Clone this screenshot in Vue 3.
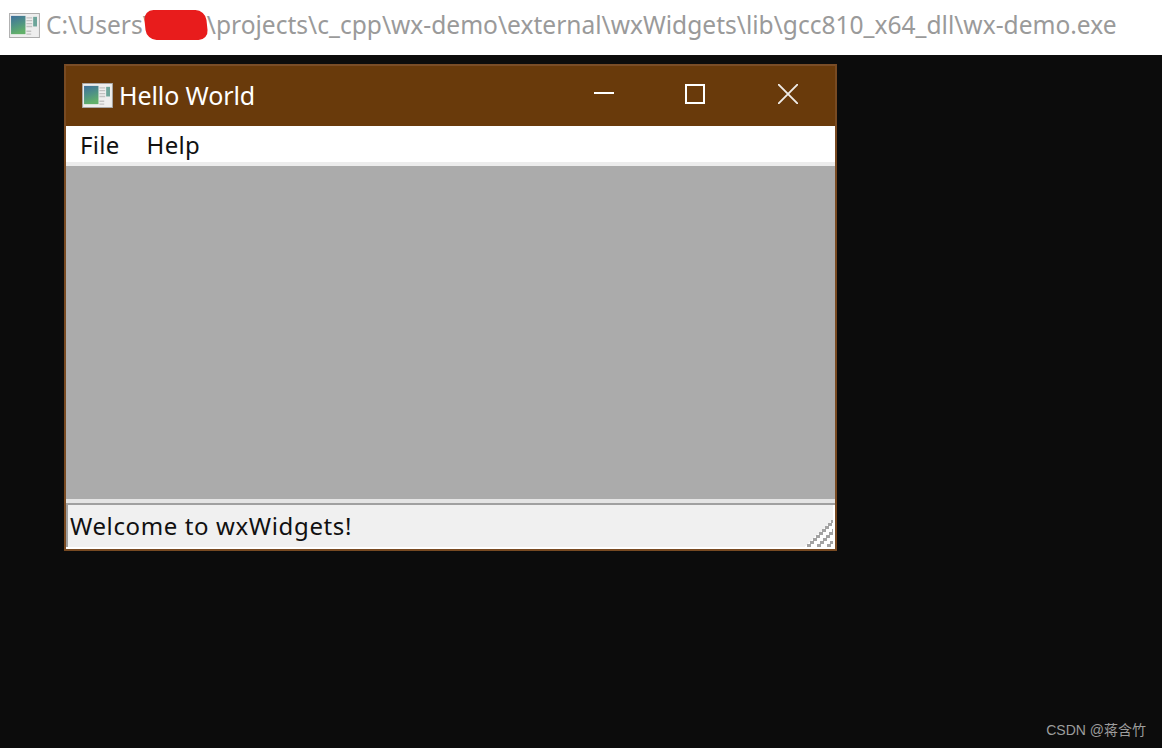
<script setup>
const path1 = 'C:\\Users\\'
const path2 = '\\projects\\c_cpp\\wx-demo\\external\\wxWidgets\\lib\\gcc810_x64_dll\\wx-demo.exe'

const gripBlocks = []
for (const start of [4, 14, 24]) {
  for (let i = 0; start + i * 3 < 30; i++) {
    gripBlocks.push({ x: start + i * 3, y: 24 - i * 3 })
  }
}
</script>

<template>
  <div class="screen">
    <header class="pathbar">
      <svg class="appicon" width="31" height="25" viewBox="0 0 32 26">
        <defs>
          <linearGradient id="pane" x1="0" y1="0" x2="0.3" y2="1">
            <stop offset="0" stop-color="#3f6f9c" />
            <stop offset="0.55" stop-color="#4f9384" />
            <stop offset="1" stop-color="#62b06a" />
          </linearGradient>
        </defs>
        <rect x="0.5" y="0.5" width="31" height="25" fill="#eeeeee" stroke="#a9a9a9" />
        <rect x="2" y="3" width="15" height="19" fill="url(#pane)" />
        <rect x="25" y="4" width="4" height="10" fill="#6da59a" />
        <path d="M18 5h6M18 8h6M18 11h6M18 14h6M18 19h5M18 22h5" stroke="#c2c2c2" stroke-width="1.4" />
      </svg>
      <span class="path">{{ path1 }}<span class="redact"></span>{{ path2 }}</span>
    </header>

    <section class="window">
      <div class="titlebar">
        <svg class="appicon" width="31" height="25" viewBox="0 0 32 26">
          <rect x="0.5" y="0.5" width="31" height="25" fill="#eeeeee" stroke="#a9a9a9" />
          <rect x="2" y="3" width="15" height="19" fill="url(#pane)" />
          <rect x="25" y="4" width="4" height="10" fill="#6da59a" />
          <path d="M18 5h6M18 8h6M18 11h6M18 14h6M18 19h5M18 22h5" stroke="#c2c2c2" stroke-width="1.4" />
        </svg>
        <span class="title">Hello World</span>
        <div class="controls">
          <svg width="20" height="20" viewBox="0 0 20 20"><path d="M0 9h20" stroke="#fff" stroke-width="2" /></svg>
          <svg class="max" width="20" height="20" viewBox="0 0 20 20"><rect x="1" y="1" width="18" height="18" fill="none" stroke="#fff" stroke-width="2" /></svg>
          <svg width="20" height="20" viewBox="0 0 20 20"><path d="M0 0L20 20M20 0L0 20" stroke="#f0ece8" stroke-width="1.9" /></svg>
        </div>
      </div>
      <nav class="menu">
        <span>File</span>
        <span>Help</span>
      </nav>
      <div class="client"></div>
      <footer class="status">
        <span class="status-text">Welcome to wxWidgets!</span>
        <svg class="grip" width="30" height="28" viewBox="0 0 30 28" shape-rendering="crispEdges">
          <path d="M30 0V28H0Z" fill="#ffffff" />
          <rect v-for="(b, i) in gripBlocks" :key="i" :x="b.x" :y="b.y" width="4" height="3" fill="#a3a3a3" />
        </svg>
      </footer>
    </section>

    <div class="watermark">CSDN @蒋含竹</div>
  </div>
</template>

<style scoped>
.screen {
  position: relative;
  width: 1162px;
  height: 748px;
  overflow: hidden;
  background: #0c0c0c;
  font-family: "Noto Sans", "Open Sans", sans-serif;
}
.pathbar {
  display: flex;
  align-items: center;
  gap: 6px;
  height: 55px;
  padding: 0 0 4px 9px;
  background: #ffffff;
  box-sizing: border-box;
}
.path {
  display: flex;
  align-items: center;
  margin-bottom: 2px;
  color: #9a9a9a;
  font-size: 24.55px;
  white-space: pre;
}
.redact {
  display: inline-block;
  width: 62px;
  height: 30px;
  margin: 0 0 0 -7px;
  background: #e81c1c;
  border-radius: 10px;
  transform: skewX(6deg);
}
.window {
  display: flex;
  flex-direction: column;
  width: 773px;
  height: 487px;
  margin: 9px 0 0 64px;
  box-sizing: border-box;
  border: 2px solid #784a22;
  border-top-color: #7a4d27;
  background: #ffffff;
}
.titlebar {
  display: flex;
  align-items: center;
  height: 60px;
  padding: 0 0 2px 16px;
  box-sizing: border-box;
  background: #693a0b;
  flex: none;
}
.title {
  margin: 0 0 1px 6px;
  color: #ffffff;
  font-size: 25px;
  letter-spacing: -0.1px;
}
.controls {
  display: flex;
  margin-bottom: 2px;
  margin-left: auto;
  margin-right: 37px;
}
.max {
  margin: 0 73px 0 71px;
}
.menu {
  display: flex;
  gap: 27px;
  height: 36px;
  padding-left: 14px;
  align-items: center;
  background: #ffffff;
  color: #111111;
  font-size: 24px;
  letter-spacing: 0.3px;
  flex: none;
}
.client {
  height: 333px;
  border-top: 4px solid #ececec;
  background: #ababab;
  flex: none;
}
.status {
  position: relative;
  flex: 1;
  display: flex;
  align-items: center;
  border-top: 4px solid #e4e4e4;
  background: #f0f0f0;
  box-sizing: border-box;
  box-shadow: inset 0 2px 0 #a0a0a0, inset 0 -2px 0 #ffffff, inset -2px 0 0 #ffffff, inset 2px 0 0 #a0a0a0;
  padding: 0 0 2px 4px;
  color: #111111;
  font-size: 24px;
  letter-spacing: 0.62px;
}
.grip {
  position: absolute;
  right: 2px;
  bottom: 1px;
}
.watermark {
  position: absolute;
  right: 16px;
  bottom: 9px;
  color: #9d9d9d;
  font-size: 14px;
  font-family: "Liberation Sans", "Noto Sans CJK SC", sans-serif;
}
</style>
